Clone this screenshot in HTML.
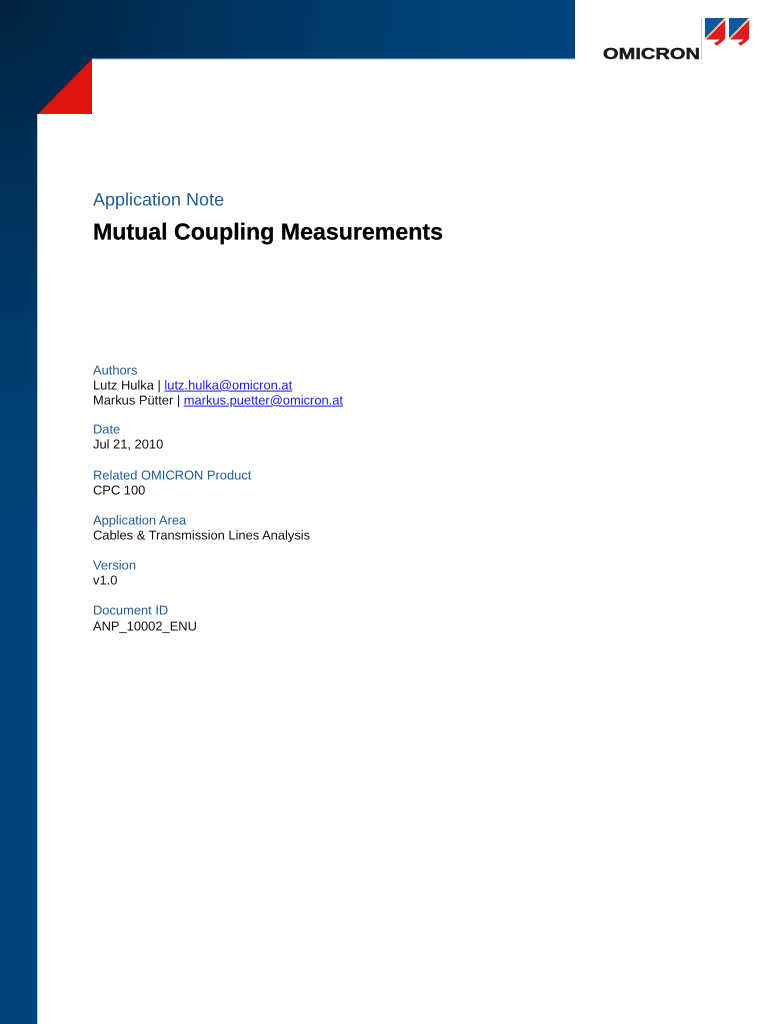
<!DOCTYPE html>
<html lang="en">
<head>
<meta charset="utf-8">
<title>Mutual Coupling Measurements</title>
<style>
html,body{margin:0;padding:0;background:#fff;}
#p{position:relative;width:768px;height:1024px;overflow:hidden;background:#fff;font-family:"Liberation Sans",sans-serif;}
#bg{position:absolute;left:0;top:0;width:768px;height:1024px;background:radial-gradient(circle at 0 0,#00223f 0,#00325c 200px,#003f72 400px,#004580 580px,#004580 100%);}
#w1{position:absolute;left:38px;top:59px;width:730px;height:965px;background:#fff;clip-path:polygon(54px 0,730px 0,730px 965px,0 965px,0 55px,54px 55px);}
#w2{position:absolute;left:575px;top:0;width:193px;height:60px;background:#fff;}
svg{position:absolute;left:0;top:0;}
.t{position:absolute;left:93px;white-space:nowrap;font-size:12.9px;line-height:15px;color:#111;filter:blur(.3px);text-rendering:geometricPrecision;transform:translateY(-.4px);}
.b{color:#1f5c94;}
a{color:#1a1ae0;text-decoration:underline;}
</style>
</head>
<body>
<div id="p">
<div id="bg"></div>
<div id="w1"></div>
<div id="w2"></div>
<svg width="768" height="1024" viewBox="0 0 768 1024">
<rect x="37" y="114" width="1" height="910" fill="#a9cbe3"/>
<rect x="92" y="58.4" width="483" height="1" fill="#7fa6c6"/>
<polygon points="92,59 92,114 38,114" fill="#e0140f"/>
<g style="filter:blur(.35px)">
<rect x="701" y="18" width="1" height="42" fill="#c9cdd0"/>
<polygon points="705,18 724.7,18 705,38.3" fill="#0f5a9e"/>
<path d="M725.3,20V37Q725.3,39 723,41L716.5,46L714,43Q718,41.5 719.5,39.5H706Z" fill="#df1a22"/>
<line x1="725" y1="18.5" x2="705.5" y2="38.8" stroke="#e8c23a" stroke-width="1"/>
<polygon points="729,18 748.7,18 729,38.3" fill="#0f5a9e"/>
<path d="M749.3,20V37Q749.3,39 747,41L740.5,46L738,43Q742,41.5 743.5,39.5H730Z" fill="#df1a22"/>
<line x1="749" y1="18.5" x2="729.5" y2="38.8" stroke="#e8c23a" stroke-width="1"/>
<text x="603" y="59" font-family="Liberation Sans" font-weight="700" font-size="15.5" fill="#1a1a1a" textLength="97" lengthAdjust="spacingAndGlyphs" stroke="#1a1a1a" stroke-width=".4">OMICRON</text>
</g>
</svg>
<div class="t b" style="top:189px;font-size:18px;line-height:22px;">Application Note</div>
<div class="t" style="top:217.5px;font-size:23.17px;line-height:28px;font-weight:700;color:#000;-webkit-text-stroke:.25px #000;">Mutual Coupling Measurements</div>
<div class="t b" style="top:363px;">Authors</div>
<div class="t" style="top:378px;">Lutz Hulka | <a>lutz.hulka@omicron.at</a></div>
<div class="t" style="top:393px;">Markus Pütter | <a>markus.puetter@omicron.at</a></div>
<div class="t b" style="top:422px;">Date</div>
<div class="t" style="top:437px;">Jul 21, 2010</div>
<div class="t b" style="top:468px;">Related OMICRON Product</div>
<div class="t" style="top:483px;">CPC 100</div>
<div class="t b" style="top:513px;">Application Area</div>
<div class="t" style="top:528px;">Cables &amp; Transmission Lines Analysis</div>
<div class="t b" style="top:558px;">Version</div>
<div class="t" style="top:573px;">v1.0</div>
<div class="t b" style="top:603px;">Document ID</div>
<div class="t" style="top:619px;">ANP_10002_ENU</div>
</div>
</body>
</html>
